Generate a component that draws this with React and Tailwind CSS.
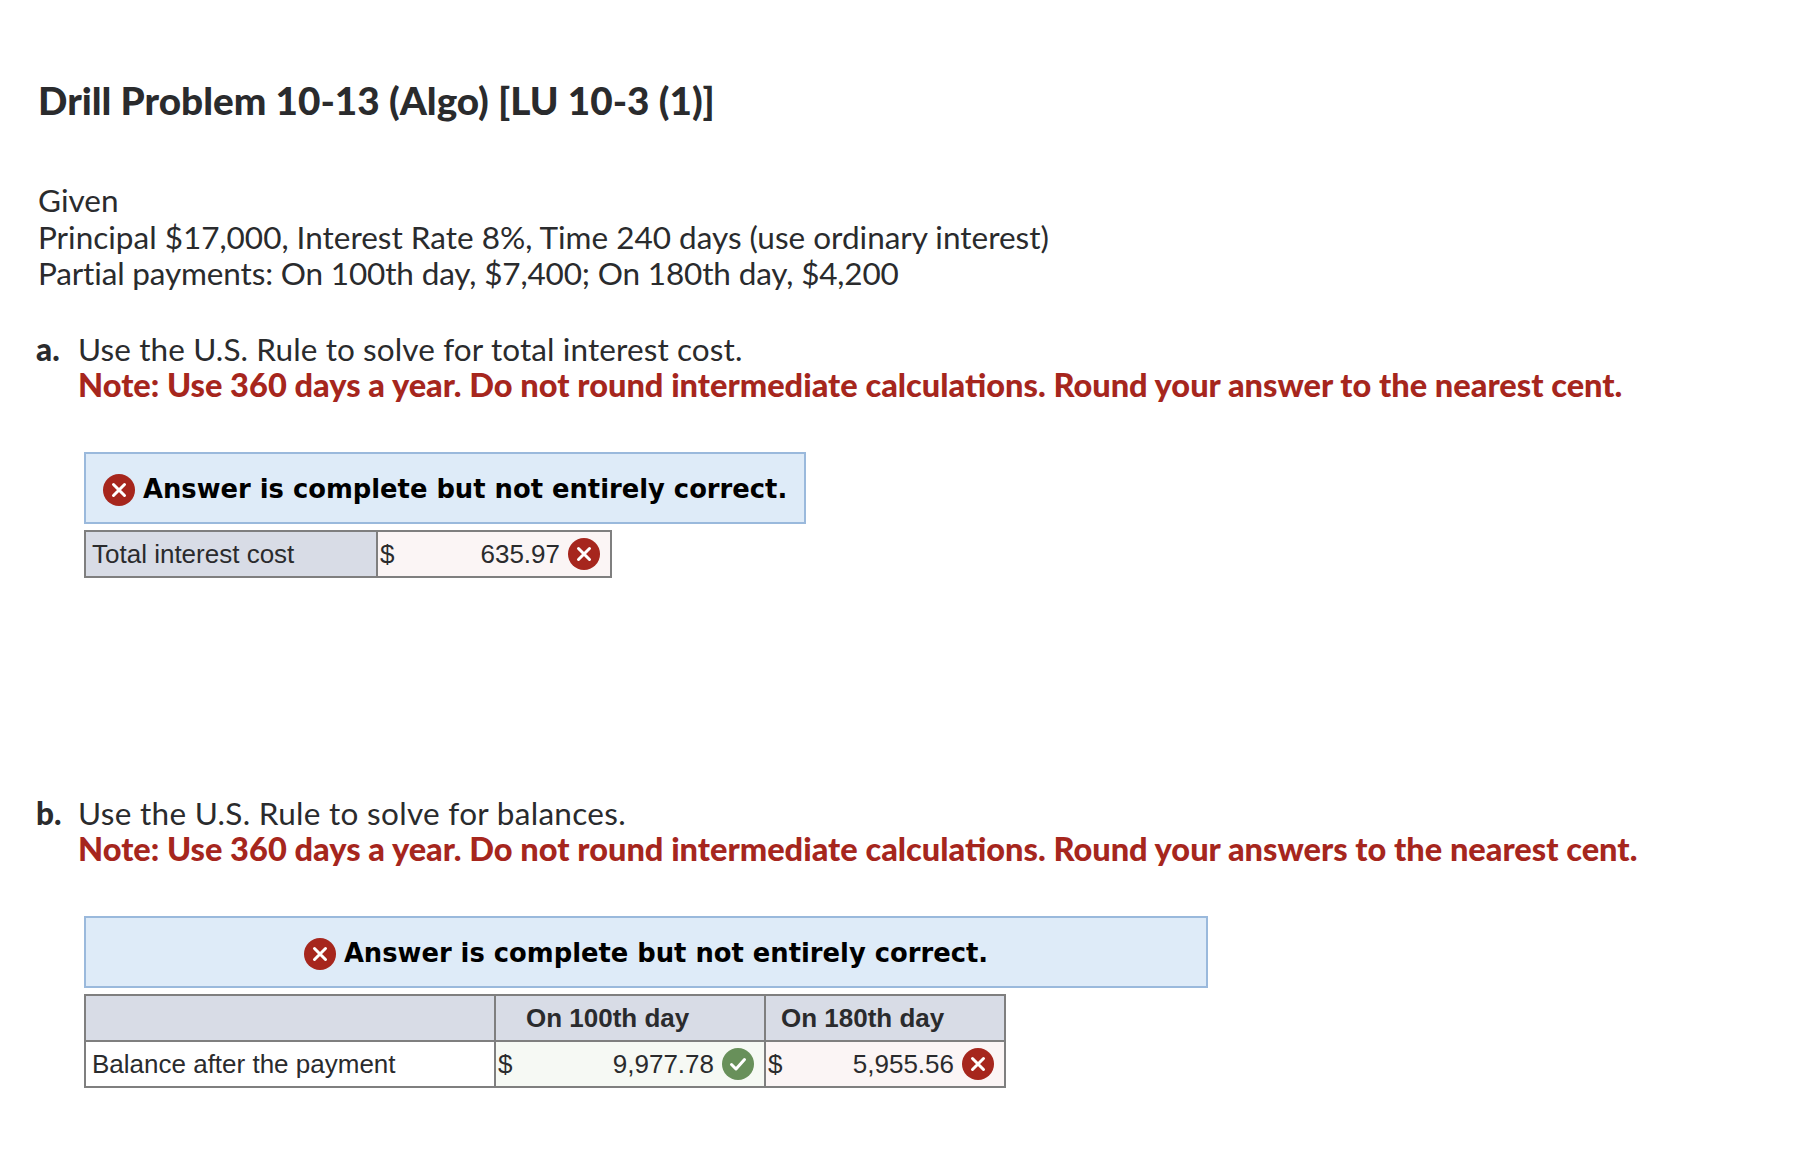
function ErrorIcon() {
  return (
    <svg viewBox="0 0 32 32" className="w-8 h-8 shrink-0">
      <circle cx="16" cy="16" r="16" fill="#a6261d" />
      <path d="M10.5 10.5 L21.5 21.5 M21.5 10.5 L10.5 21.5" stroke="#fff" strokeWidth="3" strokeLinecap="round" fill="none" />
    </svg>
  );
}

function CheckIcon() {
  return (
    <svg viewBox="0 0 32 32" className="w-8 h-8 shrink-0">
      <circle cx="16" cy="16" r="16" fill="#68905a" />
      <path d="M9.5 16.5 L14 21 L22.5 11.5" stroke="#fff" strokeWidth="3" strokeLinecap="round" strokeLinejoin="round" fill="none" />
    </svg>
  );
}

function Banner({ className }) {
  return (
    <div className={`h-[72px] pt-1 flex items-center border-2 border-[#9ab9dc] bg-[#deebf8] ${className}`}>
      <ErrorIcon />
      <span className="ml-2 whitespace-nowrap font-['DejaVu_Sans',sans-serif] font-bold text-[25.8px] text-black">
        Answer is complete but not entirely correct.
      </span>
    </div>
  );
}

function Amount({ value, icon, bg, width }) {
  return (
    <td className={`p-0 border-2 border-[#7f7f7f] ${bg} ${width}`}>
      <div className="flex items-center h-full pl-0.5 pr-[10px]">
        <span>$</span>
        <span className="ml-auto mr-2">{value}</span>
        {icon}
      </div>
    </td>
  );
}

export default function App() {
  return (
    <div className="min-h-[1172px] bg-white pt-[76px] pl-[38px] font-['Lato',sans-serif] text-[#2a2b2d]">
      <h1 className="text-[38.7px] leading-[48px] font-black">Drill Problem 10-13 (Algo) [LU 10-3 (1)]</h1>

      <div className="mt-[58px] text-[31.5px] leading-[36.5px]">
        <p>Given</p>
        <p>Principal $17,000, Interest Rate 8%, Time 240 days (use ordinary interest)</p>
        <p className="tracking-[-0.15px]">Partial payments: On 100th day, $7,400; On 180th day, $4,200</p>
      </div>

      {/* Part a */}
      <div className="mt-[39px] flex text-[31.5px] leading-[36.5px]">
        <span className="w-[40px] font-black -ml-0.5 mr-0.5">a.</span>
        <div>
          <p className="tracking-[0.11px]">Use the U.S. Rule to solve for total interest cost.</p>
          <p className="font-black text-[32.55px] text-[#a6261d]">
            Note: Use 360 days a year. Do not round intermediate calculations. Round your answer to the nearest cent.
          </p>
        </div>
      </div>

      <div className="mt-[48px] ml-[46px]">
        <Banner className="w-[722px] pl-[17px]" />
        <table className="mt-[6px] border-collapse font-['Liberation_Sans',sans-serif] text-[26px] leading-[30px] table-fixed w-[526px] h-[48px]">
          <tbody>
            <tr>
              <td className="w-[292px] border-2 border-[#7f7f7f] bg-[#d8dce6] px-1.5 py-0">Total interest cost</td>
              <Amount value="635.97" icon={<ErrorIcon />} bg="bg-[#fbf5f5]" width="w-[234px]" />
            </tr>
          </tbody>
        </table>
      </div>

      {/* Part b */}
      <div className="mt-[217px] flex text-[31.5px] leading-[36.5px]">
        <span className="w-[40px] font-black -ml-0.5 mr-0.5">b.</span>
        <div>
          <p className="tracking-[0.3px]">Use the U.S. Rule to solve for balances.</p>
          <p className="font-black text-[32.55px] text-[#a6261d]">
            Note: Use 360 days a year. Do not round intermediate calculations. Round your answers to the nearest cent.
          </p>
        </div>
      </div>

      <div className="mt-[48px] ml-[46px]">
        <Banner className="w-[1124px] justify-center" />
        <table className="mt-[6px] border-collapse font-['Liberation_Sans',sans-serif] text-[26px] leading-[30px] table-fixed w-[920px]">
          <tbody>
            <tr className="h-[46px]">
              <td className="w-[410px] border-2 border-[#7f7f7f] bg-[#d8dce6]" />
              <td className="w-[270px] border-2 border-[#7f7f7f] bg-[#d8dce6] pl-[30px] font-bold">On 100th day</td>
              <td className="w-[240px] border-2 border-[#7f7f7f] bg-[#d8dce6] pl-[15px] font-bold">On 180th day</td>
            </tr>
            <tr className="h-[46px]">
              <td className="border-2 border-[#7f7f7f] px-1.5 py-0">Balance after the payment</td>
              <Amount value="9,977.78" icon={<CheckIcon />} bg="bg-[#f6f9f4]" width="" />
              <Amount value="5,955.56" icon={<ErrorIcon />} bg="bg-[#fbf5f5]" width="" />
            </tr>
          </tbody>
        </table>
      </div>
    </div>
  );
}
